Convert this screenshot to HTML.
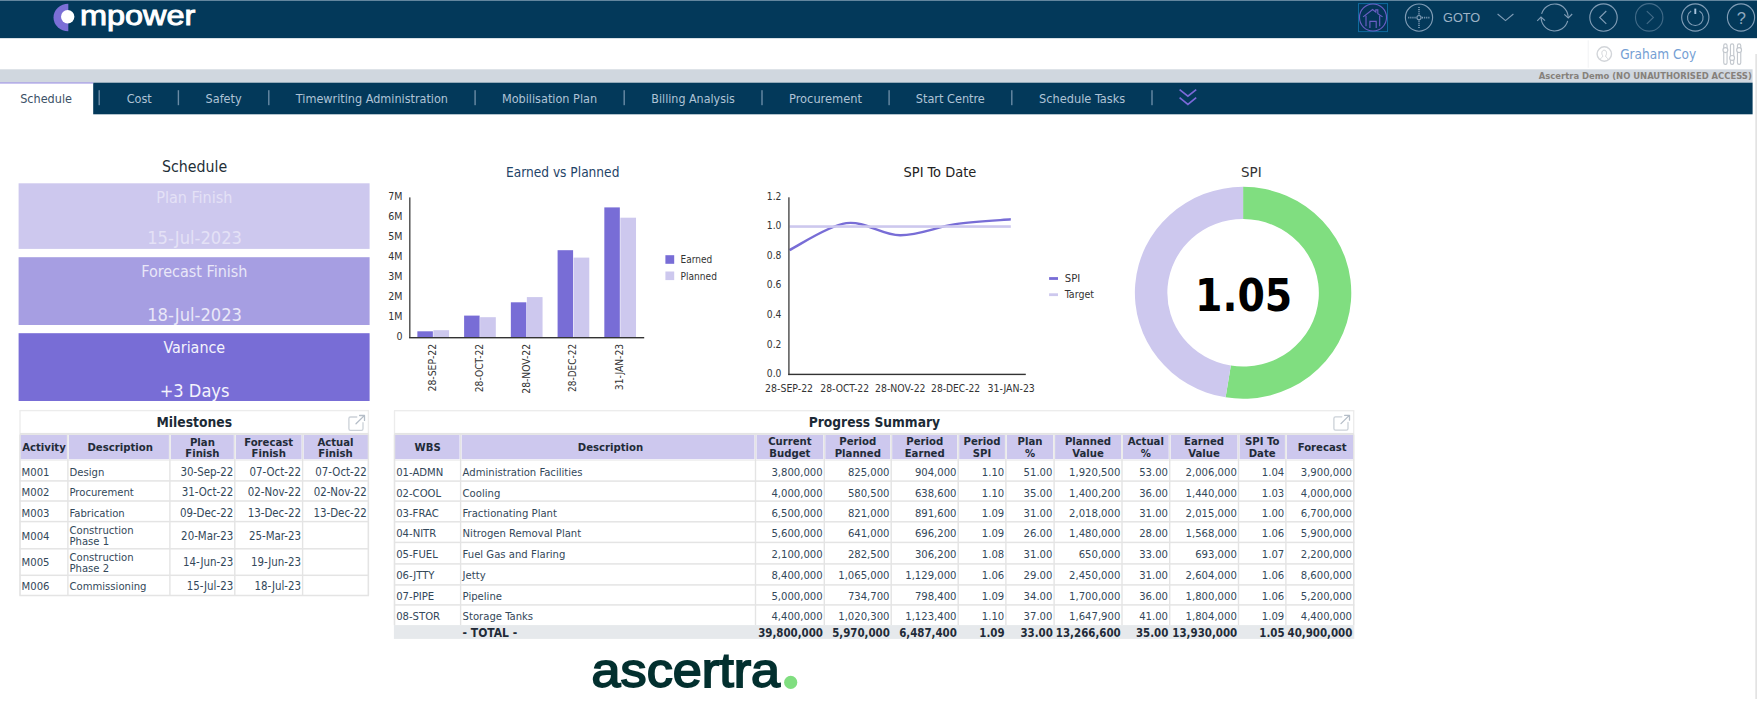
<!DOCTYPE html>
<html lang="en"><head><meta charset="utf-8"><title>mpower - Schedule</title>
<style>
html,body{margin:0;padding:0;background:#fff;}
body{width:1757px;height:701px;overflow:hidden;position:relative;font-family:"DejaVu Sans Condensed","Liberation Sans",sans-serif;font-size:11px;color:#33485a;}
.abs{position:absolute;}
#hdr{position:absolute;left:0;top:0;width:1757px;height:38px;}
#tabs{position:absolute;left:0;top:82.7px;width:1752.6px;height:30.8px;}
#tabs .tab{position:absolute;top:0.8px;width:200px;text-align:center;height:30.8px;line-height:30.8px;font-size:12.3px;color:#b7c9da;white-space:nowrap;}
svg{position:absolute;left:0;top:0;overflow:visible;}
svg text{font-family:"DejaVu Sans Condensed","Liberation Sans",sans-serif;}
svg .lib{font-family:"Liberation Sans","DejaVu Sans",sans-serif;}
</style></head><body>

<svg id="bg" width="1757" height="701" viewBox="0 0 1757 701">
<rect x="0.00" y="0.00" width="1757.00" height="38.15" fill="#03395a"/>
<rect x="0.00" y="0.00" width="1757.00" height="1.00" fill="#63869e"/>
<rect x="0.00" y="69.30" width="1752.60" height="13.60" fill="#d0d7df"/>
<rect x="93.20" y="82.70" width="1659.40" height="31.60" fill="#03395a"/>
<rect x="0.00" y="82.30" width="93.20" height="1.30" fill="#a89fe6"/>
<rect x="98.50" y="90.20" width="1.40" height="15.00" fill="#6a8ba5"/>
<rect x="177.70" y="90.20" width="1.40" height="15.00" fill="#6a8ba5"/>
<rect x="268.10" y="90.20" width="1.40" height="15.00" fill="#6a8ba5"/>
<rect x="474.40" y="90.20" width="1.40" height="15.00" fill="#6a8ba5"/>
<rect x="623.50" y="90.20" width="1.40" height="15.00" fill="#6a8ba5"/>
<rect x="761.30" y="90.20" width="1.40" height="15.00" fill="#6a8ba5"/>
<rect x="888.40" y="90.20" width="1.40" height="15.00" fill="#6a8ba5"/>
<rect x="1011.10" y="90.20" width="1.40" height="15.00" fill="#6a8ba5"/>
<rect x="1151.30" y="90.20" width="1.40" height="15.00" fill="#6a8ba5"/>
<rect x="1755.30" y="54.00" width="1.70" height="645.00" fill="#e3e3e3"/>
<rect x="18.60" y="183.30" width="351.00" height="65.60" fill="#cdc8ee"/>
<rect x="18.60" y="257.20" width="351.00" height="67.80" fill="#a69ee2"/>
<rect x="18.60" y="333.20" width="351.00" height="67.80" fill="#786dd6"/>
</svg>
<header id="hdr"></header>
<nav id="tabs"></nav>
<svg id="gfx" width="1757" height="701" viewBox="0 0 1757 701">
<g id="tablabels">
<text x="46.1" y="102.7" font-size="12.3" fill="#3b5166" text-anchor="middle" textLength="51.8" lengthAdjust="spacingAndGlyphs">Schedule</text>
<text x="139.2" y="102.7" font-size="12.3" fill="#afc3d6" text-anchor="middle" textLength="25.1" lengthAdjust="spacingAndGlyphs">Cost</text>
<text x="223.6" y="102.7" font-size="12.3" fill="#afc3d6" text-anchor="middle" textLength="36.1" lengthAdjust="spacingAndGlyphs">Safety</text>
<text x="371.9" y="102.7" font-size="12.3" fill="#afc3d6" text-anchor="middle" textLength="152.2" lengthAdjust="spacingAndGlyphs">Timewriting Administration</text>
<text x="549.5" y="102.7" font-size="12.3" fill="#afc3d6" text-anchor="middle" textLength="95.2" lengthAdjust="spacingAndGlyphs">Mobilisation Plan</text>
<text x="693.1" y="102.7" font-size="12.3" fill="#afc3d6" text-anchor="middle" textLength="83.6" lengthAdjust="spacingAndGlyphs">Billing Analysis</text>
<text x="825.5" y="102.7" font-size="12.3" fill="#afc3d6" text-anchor="middle" textLength="72.9" lengthAdjust="spacingAndGlyphs">Procurement</text>
<text x="950.3" y="102.7" font-size="12.3" fill="#afc3d6" text-anchor="middle" textLength="69.1" lengthAdjust="spacingAndGlyphs">Start Centre</text>
<text x="1082.1" y="102.7" font-size="12.3" fill="#afc3d6" text-anchor="middle" textLength="86.2" lengthAdjust="spacingAndGlyphs">Schedule Tasks</text>
</g>
<g id="cards">
<text x="194.6" y="171.7" font-size="15.7" fill="#1f2f38" text-anchor="middle" textLength="65.2" lengthAdjust="spacingAndGlyphs">Schedule</text>
<text x="194.3" y="203.0" font-size="16" fill="#e4e1f6" text-anchor="middle" textLength="76.2" lengthAdjust="spacingAndGlyphs">Plan Finish</text>
<text x="194.6" y="244.4" font-size="18" fill="#e4e1f6" text-anchor="middle" textLength="94.8" lengthAdjust="spacingAndGlyphs">15-Jul-2023</text>
<text x="194.3" y="277.2" font-size="16" fill="#e9e7f8" text-anchor="middle" textLength="106.2" lengthAdjust="spacingAndGlyphs">Forecast Finish</text>
<text x="194.6" y="320.6" font-size="18" fill="#e9e7f8" text-anchor="middle" textLength="94.8" lengthAdjust="spacingAndGlyphs">18-Jul-2023</text>
<text x="194.3" y="353.2" font-size="16" fill="#f4f3fc" text-anchor="middle" textLength="61.8" lengthAdjust="spacingAndGlyphs">Variance</text>
<text x="194.6" y="396.6" font-size="18" fill="#f4f3fc" text-anchor="middle" textLength="69.8" lengthAdjust="spacingAndGlyphs">+3 Days</text>
</g>
<g id="logo">
<path d="M68.3 3.8 A14.8 13.7 0 0 0 68.3 31.2 Z" fill="#7b6fd6"/>
<circle cx="67.7" cy="16.8" r="6.7" fill="#fff"/>
<text class="lib" x="79.9" y="25.2" font-size="27" fill="#fff" stroke="#fff" stroke-width="0.9" textLength="115.4" lengthAdjust="spacingAndGlyphs">mpower</text>
</g>
<g id="hicons" fill="none" stroke="#809db6" stroke-width="1.15">
<rect x="1358.5" y="3.6" width="29" height="28" fill="#033558" stroke="#0e6a9d" stroke-width="1"/>
<g stroke="#6a5fc4" stroke-width="1.15"><circle cx="1373" cy="17.5" r="13.5"/>
<path d="M1363.1 16.9 L1372.6 9.6 L1375.8 12.1 V9.8 H1377.8 V13.6 L1382.6 16.9 M1366 15.8 V26.2 M1379.7 15.8 V26.2 M1369.9 28 V21.4 H1376.2 V28"/></g>
<circle cx="1419" cy="17.6" r="13.6"/><circle cx="1419" cy="17.6" r="2.1"/>
<path d="M1419 7 V14.6 M1419 20.6 V28.2 M1408.2 17.6 H1416 M1422 17.6 H1429.8" stroke-dasharray="1.1 1" stroke-width="1.6"/>
<path d="M1497.6 14 L1505.5 20.6 L1513.4 14"/>
<path d="M1541.61 13.97 A13.5 13.5 0 0 1 1568.14 17.93"/>
<path d="M1567.69 20.95 A13.5 13.5 0 0 1 1541.16 16.99"/>
<path d="M1564.3 14.3 L1568.3 18 L1572.2 14 M1537.2 20.8 L1541 17 L1545 20.6"/>
<circle cx="1603.5" cy="17.5" r="13.7"/><path d="M1606.3 11 L1599.7 17.5 L1606.3 23.9"/>
<g opacity="0.5"><circle cx="1649.2" cy="17.4" r="13.7"/><path d="M1646.8 11.2 L1653.4 17.4 L1646.8 23.8"/></g>
<circle cx="1695.3" cy="17.5" r="13.6"/>
<path d="M1699.43 11.09 A7.8 7.8 0 1 1 1691.17 11.09"/>
<path d="M1695.3 8.6 V14" stroke="#a9c5df" stroke-width="1.9"/>
<circle cx="1741" cy="17.5" r="13.6"/>
</g>
<text class="lib" x="1443" y="22" font-size="13.3" fill="#9db3c6" textLength="37.2" lengthAdjust="spacingAndGlyphs">GOTO</text>
<text class="lib" x="1741.3" y="23.9" font-size="16.5" fill="#8fa9bf" text-anchor="middle" textLength="9.19" lengthAdjust="spacingAndGlyphs">?</text>
<g id="user">
<rect x="1587.70" y="40.30" width="1.00" height="27.50" fill="#f1f2f4"/>
<g fill="none" stroke="#d2d5d9" stroke-width="1.4"><circle cx="1604.3" cy="54" r="7.2"/>
<path d="M1600.3 59.6 C1600.6 57.6 1602.6 57.4 1603 56 C1601.4 54.6 1601.2 50.2 1604.2 50.2 C1607.2 50.2 1607 54.6 1605.4 56 C1605.8 57.4 1607.8 57.6 1608.1 59.6" stroke-width="1"/></g>
<text x="1620.2" y="58.8" font-size="13.3" fill="#75a0d4" textLength="75.9" lengthAdjust="spacingAndGlyphs">Graham Coy</text>
<rect x="1723.75" y="43.9" width="3.3" height="20.5" rx="1.65" fill="#fff" stroke="#c3c8ce" stroke-width="1.15"/>
<circle cx="1725.4" cy="50.1" r="2.45" fill="#fff" stroke="#c3c8ce" stroke-width="1.15"/>
<rect x="1730.45" y="43.9" width="3.3" height="20.5" rx="1.65" fill="#fff" stroke="#c3c8ce" stroke-width="1.15"/>
<circle cx="1732.1" cy="57.9" r="2.45" fill="#fff" stroke="#c3c8ce" stroke-width="1.15"/>
<rect x="1737.45" y="43.9" width="3.3" height="20.5" rx="1.65" fill="#fff" stroke="#c3c8ce" stroke-width="1.15"/>
<circle cx="1739.1" cy="50.1" r="2.45" fill="#fff" stroke="#c3c8ce" stroke-width="1.15"/>
<text x="1751.8" y="78.9" font-size="9.3" fill="#86817b" text-anchor="end" font-weight="bold" textLength="213.0" lengthAdjust="spacingAndGlyphs">Ascertra Demo (NO UNAUTHORISED ACCESS)</text>
</g>
<path d="M1179.6 89.6 L1187.9 96.2 L1196.2 89.6 M1179.6 97.6 L1187.9 104.3 L1196.2 97.6" fill="none" stroke="#7c69d9" stroke-width="1.7"/>
<g id="barchart">
<text x="562.7" y="176.7" font-size="13.6" fill="#1f4468" text-anchor="middle" textLength="113.4" lengthAdjust="spacingAndGlyphs">Earned vs Planned</text>
<rect x="417.37" y="331.30" width="15.50" height="6.00" fill="#786dd6"/>
<rect x="433.37" y="330.20" width="15.70" height="7.10" fill="#cdc8ee"/>
<rect x="464.11" y="315.60" width="15.50" height="21.70" fill="#786dd6"/>
<rect x="480.11" y="317.20" width="15.70" height="20.10" fill="#cdc8ee"/>
<rect x="510.85" y="302.30" width="15.50" height="35.00" fill="#786dd6"/>
<rect x="526.85" y="297.10" width="15.70" height="40.20" fill="#cdc8ee"/>
<rect x="557.59" y="250.20" width="15.50" height="87.10" fill="#786dd6"/>
<rect x="573.59" y="257.60" width="15.70" height="79.70" fill="#cdc8ee"/>
<rect x="604.33" y="207.40" width="15.50" height="129.90" fill="#786dd6"/>
<rect x="620.33" y="217.70" width="15.70" height="119.60" fill="#cdc8ee"/>
<rect x="409.10" y="197.40" width="1.40" height="140.60" fill="#4a4a4a"/>
<rect x="409.10" y="337.00" width="235.10" height="1.40" fill="#333"/>
<text x="402.5" y="340.1" font-size="10.5" fill="#333" text-anchor="end" textLength="6.02" lengthAdjust="spacingAndGlyphs">0</text>
<text x="402.5" y="320.1" font-size="10.5" fill="#333" text-anchor="end" textLength="14.17" lengthAdjust="spacingAndGlyphs">1M</text>
<text x="402.5" y="300.1" font-size="10.5" fill="#333" text-anchor="end" textLength="14.17" lengthAdjust="spacingAndGlyphs">2M</text>
<text x="402.5" y="280.1" font-size="10.5" fill="#333" text-anchor="end" textLength="14.17" lengthAdjust="spacingAndGlyphs">3M</text>
<text x="402.5" y="260.1" font-size="10.5" fill="#333" text-anchor="end" textLength="14.17" lengthAdjust="spacingAndGlyphs">4M</text>
<text x="402.5" y="240.1" font-size="10.5" fill="#333" text-anchor="end" textLength="14.17" lengthAdjust="spacingAndGlyphs">5M</text>
<text x="402.5" y="220.1" font-size="10.5" fill="#333" text-anchor="end" textLength="14.17" lengthAdjust="spacingAndGlyphs">6M</text>
<text x="402.5" y="200.1" font-size="10.5" fill="#333" text-anchor="end" textLength="14.17" lengthAdjust="spacingAndGlyphs">7M</text>
<text transform="translate(432.3 343.9) rotate(-90)" x="0" y="3.8" font-size="10.2" text-anchor="end" fill="#333" textLength="47.6" lengthAdjust="spacingAndGlyphs">28-SEP-22</text>
<text transform="translate(479.0 343.9) rotate(-90)" x="0" y="3.8" font-size="10.2" text-anchor="end" fill="#333" textLength="48.3" lengthAdjust="spacingAndGlyphs">28-OCT-22</text>
<text transform="translate(525.8 343.9) rotate(-90)" x="0" y="3.8" font-size="10.2" text-anchor="end" fill="#333" textLength="49.8" lengthAdjust="spacingAndGlyphs">28-NOV-22</text>
<text transform="translate(572.5 343.9) rotate(-90)" x="0" y="3.8" font-size="10.2" text-anchor="end" fill="#333" textLength="48.0" lengthAdjust="spacingAndGlyphs">28-DEC-22</text>
<text transform="translate(619.2 343.9) rotate(-90)" x="0" y="3.8" font-size="10.2" text-anchor="end" fill="#333" textLength="46.3" lengthAdjust="spacingAndGlyphs">31-JAN-23</text>
<rect x="665.40" y="255.20" width="8.80" height="8.60" fill="#786dd6"/>
<rect x="665.40" y="271.50" width="8.80" height="8.60" fill="#cdc8ee"/>
<text x="680.6" y="262.8" font-size="10" fill="#333" textLength="31.6" lengthAdjust="spacingAndGlyphs">Earned</text>
<text x="680.6" y="279.5" font-size="10" fill="#333" textLength="36.3" lengthAdjust="spacingAndGlyphs">Planned</text>
</g>
<g id="linechart">
<text x="939.9" y="176.7" font-size="14" fill="#222" text-anchor="middle" textLength="72.7" lengthAdjust="spacingAndGlyphs">SPI To Date</text>
<path d="M789.50 250.06 C798.97 245.57 827.87 225.61 846.30 223.15 C864.73 220.69 881.90 235.10 900.10 235.27 C918.30 235.45 937.05 226.85 955.50 224.18 C973.95 221.52 1001.58 220.12 1010.80 219.31" fill="none" stroke="#786dd6" stroke-width="2.4"/>
<rect x="789.50" y="225.25" width="221.30" height="2.60" fill="#cdc8ee"/>
<rect x="788.20" y="197.30" width="1.40" height="177.80" fill="#4a4a4a"/>
<rect x="788.20" y="373.70" width="237.60" height="1.40" fill="#333"/>
<text x="781.4" y="377.1" font-size="10.2" fill="#333" text-anchor="end" textLength="14.58" lengthAdjust="spacingAndGlyphs">0.0</text>
<text x="781.4" y="347.5" font-size="10.2" fill="#333" text-anchor="end" textLength="14.58" lengthAdjust="spacingAndGlyphs">0.2</text>
<text x="781.4" y="318.0" font-size="10.2" fill="#333" text-anchor="end" textLength="14.58" lengthAdjust="spacingAndGlyphs">0.4</text>
<text x="781.4" y="288.4" font-size="10.2" fill="#333" text-anchor="end" textLength="14.58" lengthAdjust="spacingAndGlyphs">0.6</text>
<text x="781.4" y="258.8" font-size="10.2" fill="#333" text-anchor="end" textLength="14.58" lengthAdjust="spacingAndGlyphs">0.8</text>
<text x="781.4" y="229.2" font-size="10.2" fill="#333" text-anchor="end" textLength="14.58" lengthAdjust="spacingAndGlyphs">1.0</text>
<text x="781.4" y="199.7" font-size="10.2" fill="#333" text-anchor="end" textLength="14.58" lengthAdjust="spacingAndGlyphs">1.2</text>
<text x="789.1" y="391.5" font-size="10.2" fill="#333" text-anchor="middle" textLength="48.0" lengthAdjust="spacingAndGlyphs">28-SEP-22</text>
<text x="844.7" y="391.5" font-size="10.2" fill="#333" text-anchor="middle" textLength="48.7" lengthAdjust="spacingAndGlyphs">28-OCT-22</text>
<text x="900.3" y="391.5" font-size="10.2" fill="#333" text-anchor="middle" textLength="50.5" lengthAdjust="spacingAndGlyphs">28-NOV-22</text>
<text x="955.6" y="391.5" font-size="10.2" fill="#333" text-anchor="middle" textLength="49.0" lengthAdjust="spacingAndGlyphs">28-DEC-22</text>
<text x="1011.2" y="391.5" font-size="10.2" fill="#333" text-anchor="middle" textLength="47.3" lengthAdjust="spacingAndGlyphs">31-JAN-23</text>
<rect x="1049.10" y="277.10" width="8.90" height="2.80" fill="#786dd6"/>
<rect x="1049.10" y="293.30" width="8.90" height="2.80" fill="#cdc8ee"/>
<text x="1064.8" y="281.7" font-size="10" fill="#333" textLength="15.5" lengthAdjust="spacingAndGlyphs">SPI</text>
<text x="1064.8" y="297.8" font-size="10" fill="#333" textLength="29.2" lengthAdjust="spacingAndGlyphs">Target</text>
</g>
<g id="donut">
<text x="1251.4" y="176.7" font-size="14" fill="#333" text-anchor="middle" textLength="20.6" lengthAdjust="spacingAndGlyphs">SPI</text>
<path d="M1243.10 186.85 A108.20 105.95 0 1 1 1225.61 397.36 L1230.86 365.58 A75.75 73.75 0 1 0 1243.10 219.05 Z" fill="#80de80"/>
<path d="M1225.61 397.36 A108.20 105.95 0 0 1 1243.10 186.85 L1243.10 219.05 A75.75 73.75 0 0 0 1230.86 365.58 Z" fill="#cdc8ee"/>
<text x="1243.6" y="311.2" font-size="44.5" fill="#000" text-anchor="middle" font-weight="bold" textLength="97.2" lengthAdjust="spacingAndGlyphs">1.05</text>
</g>
<g id="milestones">
<rect x="19.40" y="409.95" width="349.60" height="1.30" fill="#ececec"/>
<rect x="19.35" y="410.60" width="1.30" height="184.90" fill="#ececec"/>
<rect x="367.75" y="410.60" width="1.30" height="184.90" fill="#ececec"/>
<rect x="20.00" y="432.90" width="348.40" height="2.00" fill="#e4e4e4"/>
<rect x="20.30" y="435.00" width="46.60" height="24.40" fill="#cdc8ee"/>
<rect x="68.90" y="435.00" width="100.00" height="24.40" fill="#cdc8ee"/>
<rect x="170.90" y="435.00" width="62.90" height="24.40" fill="#cdc8ee"/>
<rect x="235.80" y="435.00" width="65.80" height="24.40" fill="#cdc8ee"/>
<rect x="303.60" y="435.00" width="64.50" height="24.40" fill="#cdc8ee"/>
<rect x="19.40" y="459.45" width="349.60" height="1.50" fill="#f1f1f1"/>
<rect x="19.40" y="480.15" width="349.60" height="1.50" fill="#e4e4e4"/>
<rect x="19.40" y="500.25" width="349.60" height="1.50" fill="#e4e4e4"/>
<rect x="19.40" y="520.85" width="349.60" height="1.50" fill="#e4e4e4"/>
<rect x="19.40" y="548.05" width="349.60" height="1.50" fill="#e4e4e4"/>
<rect x="19.40" y="574.55" width="349.60" height="1.50" fill="#e4e4e4"/>
<rect x="19.40" y="594.75" width="349.60" height="1.50" fill="#e4e4e4"/>
<rect x="67.20" y="434.60" width="1.40" height="160.90" fill="#e4e4e4"/>
<rect x="169.20" y="434.60" width="1.40" height="160.90" fill="#e4e4e4"/>
<rect x="234.10" y="434.60" width="1.40" height="160.90" fill="#e4e4e4"/>
<rect x="301.90" y="434.60" width="1.40" height="160.90" fill="#e4e4e4"/>
<rect x="19.30" y="434.60" width="1.40" height="160.90" fill="#e4e4e4"/>
<rect x="367.70" y="434.60" width="1.40" height="160.90" fill="#e4e4e4"/>
<text x="194.3" y="427.3" font-size="13.6" fill="#1c2a36" text-anchor="middle" font-weight="bold" textLength="75.6" lengthAdjust="spacingAndGlyphs">Milestones</text>
<g fill="none" stroke="#cbd1d8" stroke-width="1.3" stroke-linecap="round" stroke-linejoin="round"><path d="M356.8 417.0 H350.5 Q348.9 417.0 348.9 418.6 V428.8 Q348.9 430.4 350.5 430.4 H361.4 Q363.0 430.4 363.0 428.8 V422.7"/><path d="M356.0 423.8 L364.3 415.6 M359.6 415.5 H364.5 V420.4" stroke="#b4bdc7"/></g>
<text x="44.0" y="451.4" font-size="11.25" fill="#222b38" text-anchor="middle" font-weight="bold" textLength="43.64" lengthAdjust="spacingAndGlyphs">Activity</text>
<text x="120.2" y="451.4" font-size="11.25" fill="#222b38" text-anchor="middle" font-weight="bold" textLength="65.47" lengthAdjust="spacingAndGlyphs">Description</text>
<text x="202.4" y="445.5" font-size="11.25" fill="#222b38" text-anchor="middle" font-weight="bold" textLength="24.92" lengthAdjust="spacingAndGlyphs">Plan</text>
<text x="202.4" y="456.6" font-size="11.25" fill="#222b38" text-anchor="middle" font-weight="bold" textLength="34.30" lengthAdjust="spacingAndGlyphs">Finish</text>
<text x="268.7" y="445.5" font-size="11.25" fill="#222b38" text-anchor="middle" font-weight="bold" textLength="48.97" lengthAdjust="spacingAndGlyphs">Forecast</text>
<text x="268.7" y="456.6" font-size="11.25" fill="#222b38" text-anchor="middle" font-weight="bold" textLength="34.30" lengthAdjust="spacingAndGlyphs">Finish</text>
<text x="335.5" y="445.5" font-size="11.25" fill="#222b38" text-anchor="middle" font-weight="bold" textLength="36.19" lengthAdjust="spacingAndGlyphs">Actual</text>
<text x="335.5" y="456.6" font-size="11.25" fill="#222b38" text-anchor="middle" font-weight="bold" textLength="34.30" lengthAdjust="spacingAndGlyphs">Finish</text>
<text x="21.6" y="475.7" font-size="11.2" fill="#33485a" textLength="27.91" lengthAdjust="spacingAndGlyphs">M001</text>
<text x="69.5" y="475.7" font-size="11.2" fill="#33485a" textLength="34.77" lengthAdjust="spacingAndGlyphs">Design</text>
<text x="233.2" y="475.7" font-size="11.4" fill="#33485a" text-anchor="end" textLength="52.80" lengthAdjust="spacingAndGlyphs">30-Sep-22</text>
<text x="301.0" y="475.7" font-size="11.4" fill="#33485a" text-anchor="end" textLength="51.52" lengthAdjust="spacingAndGlyphs">07-Oct-22</text>
<text x="366.8" y="475.7" font-size="11.4" fill="#33485a" text-anchor="end" textLength="51.52" lengthAdjust="spacingAndGlyphs">07-Oct-22</text>
<text x="21.6" y="496.2" font-size="11.2" fill="#33485a" textLength="27.91" lengthAdjust="spacingAndGlyphs">M002</text>
<text x="69.5" y="496.2" font-size="11.2" fill="#33485a" textLength="64.25" lengthAdjust="spacingAndGlyphs">Procurement</text>
<text x="233.2" y="496.2" font-size="11.4" fill="#33485a" text-anchor="end" textLength="51.52" lengthAdjust="spacingAndGlyphs">31-Oct-22</text>
<text x="301.0" y="496.2" font-size="11.4" fill="#33485a" text-anchor="end" textLength="53.17" lengthAdjust="spacingAndGlyphs">02-Nov-22</text>
<text x="366.8" y="496.2" font-size="11.4" fill="#33485a" text-anchor="end" textLength="53.17" lengthAdjust="spacingAndGlyphs">02-Nov-22</text>
<text x="21.6" y="516.6" font-size="11.2" fill="#33485a" textLength="27.91" lengthAdjust="spacingAndGlyphs">M003</text>
<text x="69.5" y="516.6" font-size="11.2" fill="#33485a" textLength="55.23" lengthAdjust="spacingAndGlyphs">Fabrication</text>
<text x="233.2" y="516.6" font-size="11.4" fill="#33485a" text-anchor="end" textLength="53.31" lengthAdjust="spacingAndGlyphs">09-Dec-22</text>
<text x="301.0" y="516.6" font-size="11.4" fill="#33485a" text-anchor="end" textLength="53.31" lengthAdjust="spacingAndGlyphs">13-Dec-22</text>
<text x="366.8" y="516.6" font-size="11.4" fill="#33485a" text-anchor="end" textLength="53.31" lengthAdjust="spacingAndGlyphs">13-Dec-22</text>
<text x="21.6" y="539.9" font-size="11.2" fill="#33485a" textLength="27.91" lengthAdjust="spacingAndGlyphs">M004</text>
<text x="69.5" y="534.3" font-size="11.2" fill="#33485a" textLength="64.09" lengthAdjust="spacingAndGlyphs">Construction</text>
<text x="69.5" y="545.4" font-size="11.2" fill="#33485a" textLength="39.66" lengthAdjust="spacingAndGlyphs">Phase 1</text>
<text x="233.2" y="539.9" font-size="11.4" fill="#33485a" text-anchor="end" textLength="52.08" lengthAdjust="spacingAndGlyphs">20-Mar-23</text>
<text x="301.0" y="539.9" font-size="11.4" fill="#33485a" text-anchor="end" textLength="52.08" lengthAdjust="spacingAndGlyphs">25-Mar-23</text>
<text x="21.6" y="566.4" font-size="11.2" fill="#33485a" textLength="27.91" lengthAdjust="spacingAndGlyphs">M005</text>
<text x="69.5" y="560.8" font-size="11.2" fill="#33485a" textLength="64.09" lengthAdjust="spacingAndGlyphs">Construction</text>
<text x="69.5" y="571.9" font-size="11.2" fill="#33485a" textLength="39.66" lengthAdjust="spacingAndGlyphs">Phase 2</text>
<text x="233.2" y="566.4" font-size="11.4" fill="#33485a" text-anchor="end" textLength="50.12" lengthAdjust="spacingAndGlyphs">14-Jun-23</text>
<text x="301.0" y="566.4" font-size="11.4" fill="#33485a" text-anchor="end" textLength="50.12" lengthAdjust="spacingAndGlyphs">19-Jun-23</text>
<text x="21.6" y="589.9" font-size="11.2" fill="#33485a" textLength="27.91" lengthAdjust="spacingAndGlyphs">M006</text>
<text x="69.5" y="589.9" font-size="11.2" fill="#33485a" textLength="77.00" lengthAdjust="spacingAndGlyphs">Commissioning</text>
<text x="233.2" y="589.9" font-size="11.4" fill="#33485a" text-anchor="end" textLength="46.48" lengthAdjust="spacingAndGlyphs">15-Jul-23</text>
<text x="301.0" y="589.9" font-size="11.4" fill="#33485a" text-anchor="end" textLength="46.48" lengthAdjust="spacingAndGlyphs">18-Jul-23</text>
</g>
<g id="progress">
<rect x="393.90" y="410.05" width="960.40" height="1.30" fill="#ececec"/>
<rect x="393.85" y="410.70" width="1.30" height="214.50" fill="#ececec"/>
<rect x="1353.05" y="410.70" width="1.30" height="214.50" fill="#ececec"/>
<rect x="394.50" y="432.90" width="959.20" height="2.00" fill="#e4e4e4"/>
<rect x="394.50" y="435.00" width="65.10" height="24.30" fill="#cdc8ee"/>
<rect x="461.60" y="435.00" width="292.90" height="24.30" fill="#cdc8ee"/>
<rect x="756.50" y="435.00" width="66.80" height="24.30" fill="#cdc8ee"/>
<rect x="825.30" y="435.00" width="64.90" height="24.30" fill="#cdc8ee"/>
<rect x="892.20" y="435.00" width="65.00" height="24.30" fill="#cdc8ee"/>
<rect x="959.20" y="435.00" width="45.70" height="24.30" fill="#cdc8ee"/>
<rect x="1006.90" y="435.00" width="46.20" height="24.30" fill="#cdc8ee"/>
<rect x="1055.10" y="435.00" width="65.90" height="24.30" fill="#cdc8ee"/>
<rect x="1123.00" y="435.00" width="45.70" height="24.30" fill="#cdc8ee"/>
<rect x="1170.70" y="435.00" width="66.80" height="24.30" fill="#cdc8ee"/>
<rect x="1239.50" y="435.00" width="45.40" height="24.30" fill="#cdc8ee"/>
<rect x="1286.90" y="435.00" width="66.50" height="24.30" fill="#cdc8ee"/>
<rect x="393.90" y="459.55" width="960.40" height="1.50" fill="#f1f1f1"/>
<rect x="393.90" y="480.35" width="960.40" height="1.50" fill="#e4e4e4"/>
<rect x="393.90" y="500.35" width="960.40" height="1.50" fill="#e4e4e4"/>
<rect x="393.90" y="521.05" width="960.40" height="1.50" fill="#e4e4e4"/>
<rect x="393.90" y="541.65" width="960.40" height="1.50" fill="#e4e4e4"/>
<rect x="393.90" y="563.15" width="960.40" height="1.50" fill="#e4e4e4"/>
<rect x="393.90" y="584.15" width="960.40" height="1.50" fill="#e4e4e4"/>
<rect x="393.90" y="604.15" width="960.40" height="1.50" fill="#e4e4e4"/>
<rect x="459.90" y="434.60" width="1.40" height="190.60" fill="#e4e4e4"/>
<rect x="754.80" y="434.60" width="1.40" height="190.60" fill="#e4e4e4"/>
<rect x="823.60" y="434.60" width="1.40" height="190.60" fill="#e4e4e4"/>
<rect x="890.50" y="434.60" width="1.40" height="190.60" fill="#e4e4e4"/>
<rect x="957.50" y="434.60" width="1.40" height="190.60" fill="#e4e4e4"/>
<rect x="1005.20" y="434.60" width="1.40" height="190.60" fill="#e4e4e4"/>
<rect x="1053.40" y="434.60" width="1.40" height="190.60" fill="#e4e4e4"/>
<rect x="1121.30" y="434.60" width="1.40" height="190.60" fill="#e4e4e4"/>
<rect x="1169.00" y="434.60" width="1.40" height="190.60" fill="#e4e4e4"/>
<rect x="1237.80" y="434.60" width="1.40" height="190.60" fill="#e4e4e4"/>
<rect x="1285.20" y="434.60" width="1.40" height="190.60" fill="#e4e4e4"/>
<rect x="393.80" y="434.60" width="1.40" height="190.60" fill="#e4e4e4"/>
<rect x="1353.00" y="434.60" width="1.40" height="190.60" fill="#e4e4e4"/>
<rect x="393.90" y="625.10" width="960.40" height="13.80" fill="#e6e9ec"/>
<text x="874.4" y="426.9" font-size="13.6" fill="#1c2a36" text-anchor="middle" font-weight="bold" textLength="131.2" lengthAdjust="spacingAndGlyphs">Progress Summary</text>
<g fill="none" stroke="#cbd1d8" stroke-width="1.3" stroke-linecap="round" stroke-linejoin="round"><path d="M1341.8 416.8 H1335.5 Q1333.9 416.8 1333.9 418.4 V428.6 Q1333.9 430.2 1335.5 430.2 H1346.4 Q1348.0 430.2 1348.0 428.6 V422.5"/><path d="M1341.0 423.6 L1349.3 415.4 M1344.6 415.3 H1349.5 V420.2" stroke="#b4bdc7"/></g>
<text x="427.6" y="451.4" font-size="11.25" fill="#222b38" text-anchor="middle" font-weight="bold" textLength="26.17" lengthAdjust="spacingAndGlyphs">WBS</text>
<text x="610.5" y="451.4" font-size="11.25" fill="#222b38" text-anchor="middle" font-weight="bold" textLength="65.47" lengthAdjust="spacingAndGlyphs">Description</text>
<text x="789.9" y="445.4" font-size="11.25" fill="#222b38" text-anchor="middle" font-weight="bold" textLength="43.55" lengthAdjust="spacingAndGlyphs">Current</text>
<text x="789.9" y="456.8" font-size="11.25" fill="#222b38" text-anchor="middle" font-weight="bold" textLength="41.12" lengthAdjust="spacingAndGlyphs">Budget</text>
<text x="857.8" y="445.4" font-size="11.25" fill="#222b38" text-anchor="middle" font-weight="bold" textLength="36.95" lengthAdjust="spacingAndGlyphs">Period</text>
<text x="857.8" y="456.8" font-size="11.25" fill="#222b38" text-anchor="middle" font-weight="bold" textLength="46.25" lengthAdjust="spacingAndGlyphs">Planned</text>
<text x="924.7" y="445.4" font-size="11.25" fill="#222b38" text-anchor="middle" font-weight="bold" textLength="36.95" lengthAdjust="spacingAndGlyphs">Period</text>
<text x="924.7" y="456.8" font-size="11.25" fill="#222b38" text-anchor="middle" font-weight="bold" textLength="40.06" lengthAdjust="spacingAndGlyphs">Earned</text>
<text x="982.0" y="445.4" font-size="11.25" fill="#222b38" text-anchor="middle" font-weight="bold" textLength="36.95" lengthAdjust="spacingAndGlyphs">Period</text>
<text x="982.0" y="456.8" font-size="11.25" fill="#222b38" text-anchor="middle" font-weight="bold" textLength="18.47" lengthAdjust="spacingAndGlyphs">SPI</text>
<text x="1030.0" y="445.4" font-size="11.25" fill="#222b38" text-anchor="middle" font-weight="bold" textLength="24.92" lengthAdjust="spacingAndGlyphs">Plan</text>
<text x="1030.0" y="456.8" font-size="11.25" fill="#222b38" text-anchor="middle" font-weight="bold" textLength="10.14" lengthAdjust="spacingAndGlyphs">%</text>
<text x="1088.0" y="445.4" font-size="11.25" fill="#222b38" text-anchor="middle" font-weight="bold" textLength="46.25" lengthAdjust="spacingAndGlyphs">Planned</text>
<text x="1088.0" y="456.8" font-size="11.25" fill="#222b38" text-anchor="middle" font-weight="bold" textLength="31.59" lengthAdjust="spacingAndGlyphs">Value</text>
<text x="1145.8" y="445.4" font-size="11.25" fill="#222b38" text-anchor="middle" font-weight="bold" textLength="36.19" lengthAdjust="spacingAndGlyphs">Actual</text>
<text x="1145.8" y="456.8" font-size="11.25" fill="#222b38" text-anchor="middle" font-weight="bold" textLength="10.14" lengthAdjust="spacingAndGlyphs">%</text>
<text x="1204.1" y="445.4" font-size="11.25" fill="#222b38" text-anchor="middle" font-weight="bold" textLength="40.06" lengthAdjust="spacingAndGlyphs">Earned</text>
<text x="1204.1" y="456.8" font-size="11.25" fill="#222b38" text-anchor="middle" font-weight="bold" textLength="31.59" lengthAdjust="spacingAndGlyphs">Value</text>
<text x="1262.2" y="445.4" font-size="11.25" fill="#222b38" text-anchor="middle" font-weight="bold" textLength="34.36" lengthAdjust="spacingAndGlyphs">SPI To</text>
<text x="1262.2" y="456.8" font-size="11.25" fill="#222b38" text-anchor="middle" font-weight="bold" textLength="26.95" lengthAdjust="spacingAndGlyphs">Date</text>
<text x="1322.2" y="451.4" font-size="11.25" fill="#222b38" text-anchor="middle" font-weight="bold" textLength="48.97" lengthAdjust="spacingAndGlyphs">Forecast</text>
<text x="396.2" y="475.8" font-size="11.2" fill="#33485a" textLength="47.05" lengthAdjust="spacingAndGlyphs">01-ADMN</text>
<text x="462.6" y="475.8" font-size="11.2" fill="#33485a" textLength="119.86" lengthAdjust="spacingAndGlyphs">Administration Facilities</text>
<text x="822.6" y="475.8" font-size="11.2" fill="#33485a" text-anchor="end" textLength="51.22" lengthAdjust="spacingAndGlyphs">3,800,000</text>
<text x="889.5" y="475.8" font-size="11.2" fill="#33485a" text-anchor="end" textLength="41.61" lengthAdjust="spacingAndGlyphs">825,000</text>
<text x="956.5" y="475.8" font-size="11.2" fill="#33485a" text-anchor="end" textLength="41.61" lengthAdjust="spacingAndGlyphs">904,000</text>
<text x="1004.2" y="475.8" font-size="11.2" fill="#33485a" text-anchor="end" textLength="22.41" lengthAdjust="spacingAndGlyphs">1.10</text>
<text x="1052.4" y="475.8" font-size="11.2" fill="#33485a" text-anchor="end" textLength="28.81" lengthAdjust="spacingAndGlyphs">51.00</text>
<text x="1120.3" y="475.8" font-size="11.2" fill="#33485a" text-anchor="end" textLength="51.22" lengthAdjust="spacingAndGlyphs">1,920,500</text>
<text x="1168.0" y="475.8" font-size="11.2" fill="#33485a" text-anchor="end" textLength="28.81" lengthAdjust="spacingAndGlyphs">53.00</text>
<text x="1236.8" y="475.8" font-size="11.2" fill="#33485a" text-anchor="end" textLength="51.22" lengthAdjust="spacingAndGlyphs">2,006,000</text>
<text x="1284.2" y="475.8" font-size="11.2" fill="#33485a" text-anchor="end" textLength="22.41" lengthAdjust="spacingAndGlyphs">1.04</text>
<text x="1352.0" y="475.8" font-size="11.2" fill="#33485a" text-anchor="end" textLength="51.22" lengthAdjust="spacingAndGlyphs">3,900,000</text>
<text x="396.2" y="496.6" font-size="11.2" fill="#33485a" textLength="44.92" lengthAdjust="spacingAndGlyphs">02-COOL</text>
<text x="462.6" y="496.6" font-size="11.2" fill="#33485a" textLength="37.72" lengthAdjust="spacingAndGlyphs">Cooling</text>
<text x="822.6" y="496.6" font-size="11.2" fill="#33485a" text-anchor="end" textLength="51.22" lengthAdjust="spacingAndGlyphs">4,000,000</text>
<text x="889.5" y="496.6" font-size="11.2" fill="#33485a" text-anchor="end" textLength="41.61" lengthAdjust="spacingAndGlyphs">580,500</text>
<text x="956.5" y="496.6" font-size="11.2" fill="#33485a" text-anchor="end" textLength="41.61" lengthAdjust="spacingAndGlyphs">638,600</text>
<text x="1004.2" y="496.6" font-size="11.2" fill="#33485a" text-anchor="end" textLength="22.41" lengthAdjust="spacingAndGlyphs">1.10</text>
<text x="1052.4" y="496.6" font-size="11.2" fill="#33485a" text-anchor="end" textLength="28.81" lengthAdjust="spacingAndGlyphs">35.00</text>
<text x="1120.3" y="496.6" font-size="11.2" fill="#33485a" text-anchor="end" textLength="51.22" lengthAdjust="spacingAndGlyphs">1,400,200</text>
<text x="1168.0" y="496.6" font-size="11.2" fill="#33485a" text-anchor="end" textLength="28.81" lengthAdjust="spacingAndGlyphs">36.00</text>
<text x="1236.8" y="496.6" font-size="11.2" fill="#33485a" text-anchor="end" textLength="51.22" lengthAdjust="spacingAndGlyphs">1,440,000</text>
<text x="1284.2" y="496.6" font-size="11.2" fill="#33485a" text-anchor="end" textLength="22.41" lengthAdjust="spacingAndGlyphs">1.03</text>
<text x="1352.0" y="496.6" font-size="11.2" fill="#33485a" text-anchor="end" textLength="51.22" lengthAdjust="spacingAndGlyphs">4,000,000</text>
<text x="396.2" y="516.6" font-size="11.2" fill="#33485a" textLength="42.48" lengthAdjust="spacingAndGlyphs">03-FRAC</text>
<text x="462.6" y="516.6" font-size="11.2" fill="#33485a" textLength="94.33" lengthAdjust="spacingAndGlyphs">Fractionating Plant</text>
<text x="822.6" y="516.6" font-size="11.2" fill="#33485a" text-anchor="end" textLength="51.22" lengthAdjust="spacingAndGlyphs">6,500,000</text>
<text x="889.5" y="516.6" font-size="11.2" fill="#33485a" text-anchor="end" textLength="41.61" lengthAdjust="spacingAndGlyphs">821,000</text>
<text x="956.5" y="516.6" font-size="11.2" fill="#33485a" text-anchor="end" textLength="41.61" lengthAdjust="spacingAndGlyphs">891,600</text>
<text x="1004.2" y="516.6" font-size="11.2" fill="#33485a" text-anchor="end" textLength="22.41" lengthAdjust="spacingAndGlyphs">1.09</text>
<text x="1052.4" y="516.6" font-size="11.2" fill="#33485a" text-anchor="end" textLength="28.81" lengthAdjust="spacingAndGlyphs">31.00</text>
<text x="1120.3" y="516.6" font-size="11.2" fill="#33485a" text-anchor="end" textLength="51.22" lengthAdjust="spacingAndGlyphs">2,018,000</text>
<text x="1168.0" y="516.6" font-size="11.2" fill="#33485a" text-anchor="end" textLength="28.81" lengthAdjust="spacingAndGlyphs">31.00</text>
<text x="1236.8" y="516.6" font-size="11.2" fill="#33485a" text-anchor="end" textLength="51.22" lengthAdjust="spacingAndGlyphs">2,015,000</text>
<text x="1284.2" y="516.6" font-size="11.2" fill="#33485a" text-anchor="end" textLength="22.41" lengthAdjust="spacingAndGlyphs">1.00</text>
<text x="1352.0" y="516.6" font-size="11.2" fill="#33485a" text-anchor="end" textLength="51.22" lengthAdjust="spacingAndGlyphs">6,700,000</text>
<text x="396.2" y="537.3" font-size="11.2" fill="#33485a" textLength="40.08" lengthAdjust="spacingAndGlyphs">04-NITR</text>
<text x="462.6" y="537.3" font-size="11.2" fill="#33485a" textLength="118.59" lengthAdjust="spacingAndGlyphs">Nitrogen Removal Plant</text>
<text x="822.6" y="537.3" font-size="11.2" fill="#33485a" text-anchor="end" textLength="51.22" lengthAdjust="spacingAndGlyphs">5,600,000</text>
<text x="889.5" y="537.3" font-size="11.2" fill="#33485a" text-anchor="end" textLength="41.61" lengthAdjust="spacingAndGlyphs">641,000</text>
<text x="956.5" y="537.3" font-size="11.2" fill="#33485a" text-anchor="end" textLength="41.61" lengthAdjust="spacingAndGlyphs">696,200</text>
<text x="1004.2" y="537.3" font-size="11.2" fill="#33485a" text-anchor="end" textLength="22.41" lengthAdjust="spacingAndGlyphs">1.09</text>
<text x="1052.4" y="537.3" font-size="11.2" fill="#33485a" text-anchor="end" textLength="28.81" lengthAdjust="spacingAndGlyphs">26.00</text>
<text x="1120.3" y="537.3" font-size="11.2" fill="#33485a" text-anchor="end" textLength="51.22" lengthAdjust="spacingAndGlyphs">1,480,000</text>
<text x="1168.0" y="537.3" font-size="11.2" fill="#33485a" text-anchor="end" textLength="28.81" lengthAdjust="spacingAndGlyphs">28.00</text>
<text x="1236.8" y="537.3" font-size="11.2" fill="#33485a" text-anchor="end" textLength="51.22" lengthAdjust="spacingAndGlyphs">1,568,000</text>
<text x="1284.2" y="537.3" font-size="11.2" fill="#33485a" text-anchor="end" textLength="22.41" lengthAdjust="spacingAndGlyphs">1.06</text>
<text x="1352.0" y="537.3" font-size="11.2" fill="#33485a" text-anchor="end" textLength="51.22" lengthAdjust="spacingAndGlyphs">5,900,000</text>
<text x="396.2" y="557.9" font-size="11.2" fill="#33485a" textLength="41.56" lengthAdjust="spacingAndGlyphs">05-FUEL</text>
<text x="462.6" y="557.9" font-size="11.2" fill="#33485a" textLength="102.75" lengthAdjust="spacingAndGlyphs">Fuel Gas and Flaring</text>
<text x="822.6" y="557.9" font-size="11.2" fill="#33485a" text-anchor="end" textLength="51.22" lengthAdjust="spacingAndGlyphs">2,100,000</text>
<text x="889.5" y="557.9" font-size="11.2" fill="#33485a" text-anchor="end" textLength="41.61" lengthAdjust="spacingAndGlyphs">282,500</text>
<text x="956.5" y="557.9" font-size="11.2" fill="#33485a" text-anchor="end" textLength="41.61" lengthAdjust="spacingAndGlyphs">306,200</text>
<text x="1004.2" y="557.9" font-size="11.2" fill="#33485a" text-anchor="end" textLength="22.41" lengthAdjust="spacingAndGlyphs">1.08</text>
<text x="1052.4" y="557.9" font-size="11.2" fill="#33485a" text-anchor="end" textLength="28.81" lengthAdjust="spacingAndGlyphs">31.00</text>
<text x="1120.3" y="557.9" font-size="11.2" fill="#33485a" text-anchor="end" textLength="41.61" lengthAdjust="spacingAndGlyphs">650,000</text>
<text x="1168.0" y="557.9" font-size="11.2" fill="#33485a" text-anchor="end" textLength="28.81" lengthAdjust="spacingAndGlyphs">33.00</text>
<text x="1236.8" y="557.9" font-size="11.2" fill="#33485a" text-anchor="end" textLength="41.61" lengthAdjust="spacingAndGlyphs">693,000</text>
<text x="1284.2" y="557.9" font-size="11.2" fill="#33485a" text-anchor="end" textLength="22.41" lengthAdjust="spacingAndGlyphs">1.07</text>
<text x="1352.0" y="557.9" font-size="11.2" fill="#33485a" text-anchor="end" textLength="51.22" lengthAdjust="spacingAndGlyphs">2,200,000</text>
<text x="396.2" y="579.4" font-size="11.2" fill="#33485a" textLength="38.28" lengthAdjust="spacingAndGlyphs">06-JTTY</text>
<text x="462.6" y="579.4" font-size="11.2" fill="#33485a" textLength="23.02" lengthAdjust="spacingAndGlyphs">Jetty</text>
<text x="822.6" y="579.4" font-size="11.2" fill="#33485a" text-anchor="end" textLength="51.22" lengthAdjust="spacingAndGlyphs">8,400,000</text>
<text x="889.5" y="579.4" font-size="11.2" fill="#33485a" text-anchor="end" textLength="51.22" lengthAdjust="spacingAndGlyphs">1,065,000</text>
<text x="956.5" y="579.4" font-size="11.2" fill="#33485a" text-anchor="end" textLength="51.22" lengthAdjust="spacingAndGlyphs">1,129,000</text>
<text x="1004.2" y="579.4" font-size="11.2" fill="#33485a" text-anchor="end" textLength="22.41" lengthAdjust="spacingAndGlyphs">1.06</text>
<text x="1052.4" y="579.4" font-size="11.2" fill="#33485a" text-anchor="end" textLength="28.81" lengthAdjust="spacingAndGlyphs">29.00</text>
<text x="1120.3" y="579.4" font-size="11.2" fill="#33485a" text-anchor="end" textLength="51.22" lengthAdjust="spacingAndGlyphs">2,450,000</text>
<text x="1168.0" y="579.4" font-size="11.2" fill="#33485a" text-anchor="end" textLength="28.81" lengthAdjust="spacingAndGlyphs">31.00</text>
<text x="1236.8" y="579.4" font-size="11.2" fill="#33485a" text-anchor="end" textLength="51.22" lengthAdjust="spacingAndGlyphs">2,604,000</text>
<text x="1284.2" y="579.4" font-size="11.2" fill="#33485a" text-anchor="end" textLength="22.41" lengthAdjust="spacingAndGlyphs">1.06</text>
<text x="1352.0" y="579.4" font-size="11.2" fill="#33485a" text-anchor="end" textLength="51.22" lengthAdjust="spacingAndGlyphs">8,600,000</text>
<text x="396.2" y="600.4" font-size="11.2" fill="#33485a" textLength="37.91" lengthAdjust="spacingAndGlyphs">07-PIPE</text>
<text x="462.6" y="600.4" font-size="11.2" fill="#33485a" textLength="39.38" lengthAdjust="spacingAndGlyphs">Pipeline</text>
<text x="822.6" y="600.4" font-size="11.2" fill="#33485a" text-anchor="end" textLength="51.22" lengthAdjust="spacingAndGlyphs">5,000,000</text>
<text x="889.5" y="600.4" font-size="11.2" fill="#33485a" text-anchor="end" textLength="41.61" lengthAdjust="spacingAndGlyphs">734,700</text>
<text x="956.5" y="600.4" font-size="11.2" fill="#33485a" text-anchor="end" textLength="41.61" lengthAdjust="spacingAndGlyphs">798,400</text>
<text x="1004.2" y="600.4" font-size="11.2" fill="#33485a" text-anchor="end" textLength="22.41" lengthAdjust="spacingAndGlyphs">1.09</text>
<text x="1052.4" y="600.4" font-size="11.2" fill="#33485a" text-anchor="end" textLength="28.81" lengthAdjust="spacingAndGlyphs">34.00</text>
<text x="1120.3" y="600.4" font-size="11.2" fill="#33485a" text-anchor="end" textLength="51.22" lengthAdjust="spacingAndGlyphs">1,700,000</text>
<text x="1168.0" y="600.4" font-size="11.2" fill="#33485a" text-anchor="end" textLength="28.81" lengthAdjust="spacingAndGlyphs">36.00</text>
<text x="1236.8" y="600.4" font-size="11.2" fill="#33485a" text-anchor="end" textLength="51.22" lengthAdjust="spacingAndGlyphs">1,800,000</text>
<text x="1284.2" y="600.4" font-size="11.2" fill="#33485a" text-anchor="end" textLength="22.41" lengthAdjust="spacingAndGlyphs">1.06</text>
<text x="1352.0" y="600.4" font-size="11.2" fill="#33485a" text-anchor="end" textLength="51.22" lengthAdjust="spacingAndGlyphs">5,200,000</text>
<text x="396.2" y="620.4" font-size="11.2" fill="#33485a" textLength="43.89" lengthAdjust="spacingAndGlyphs">08-STOR</text>
<text x="462.6" y="620.4" font-size="11.2" fill="#33485a" textLength="70.50" lengthAdjust="spacingAndGlyphs">Storage Tanks</text>
<text x="822.6" y="620.4" font-size="11.2" fill="#33485a" text-anchor="end" textLength="51.22" lengthAdjust="spacingAndGlyphs">4,400,000</text>
<text x="889.5" y="620.4" font-size="11.2" fill="#33485a" text-anchor="end" textLength="51.22" lengthAdjust="spacingAndGlyphs">1,020,300</text>
<text x="956.5" y="620.4" font-size="11.2" fill="#33485a" text-anchor="end" textLength="51.22" lengthAdjust="spacingAndGlyphs">1,123,400</text>
<text x="1004.2" y="620.4" font-size="11.2" fill="#33485a" text-anchor="end" textLength="22.41" lengthAdjust="spacingAndGlyphs">1.10</text>
<text x="1052.4" y="620.4" font-size="11.2" fill="#33485a" text-anchor="end" textLength="28.81" lengthAdjust="spacingAndGlyphs">37.00</text>
<text x="1120.3" y="620.4" font-size="11.2" fill="#33485a" text-anchor="end" textLength="51.22" lengthAdjust="spacingAndGlyphs">1,647,900</text>
<text x="1168.0" y="620.4" font-size="11.2" fill="#33485a" text-anchor="end" textLength="28.81" lengthAdjust="spacingAndGlyphs">41.00</text>
<text x="1236.8" y="620.4" font-size="11.2" fill="#33485a" text-anchor="end" textLength="51.22" lengthAdjust="spacingAndGlyphs">1,804,000</text>
<text x="1284.2" y="620.4" font-size="11.2" fill="#33485a" text-anchor="end" textLength="22.41" lengthAdjust="spacingAndGlyphs">1.09</text>
<text x="1352.0" y="620.4" font-size="11.2" fill="#33485a" text-anchor="end" textLength="51.22" lengthAdjust="spacingAndGlyphs">4,400,000</text>
<text x="462.6" y="636.8" font-size="11.4" fill="#222b38" font-weight="bold" textLength="54.6" lengthAdjust="spacingAndGlyphs">- TOTAL -</text>
<text x="823.0" y="636.8" font-size="11.4" fill="#222b38" text-anchor="end" font-weight="bold" textLength="64.84" lengthAdjust="spacingAndGlyphs">39,800,000</text>
<text x="889.9" y="636.8" font-size="11.4" fill="#222b38" text-anchor="end" font-weight="bold" textLength="57.70" lengthAdjust="spacingAndGlyphs">5,970,000</text>
<text x="956.9" y="636.8" font-size="11.4" fill="#222b38" text-anchor="end" font-weight="bold" textLength="57.70" lengthAdjust="spacingAndGlyphs">6,487,400</text>
<text x="1004.6" y="636.8" font-size="11.4" fill="#222b38" text-anchor="end" font-weight="bold" textLength="25.30" lengthAdjust="spacingAndGlyphs">1.09</text>
<text x="1052.8" y="636.8" font-size="11.4" fill="#222b38" text-anchor="end" font-weight="bold" textLength="32.42" lengthAdjust="spacingAndGlyphs">33.00</text>
<text x="1120.7" y="636.8" font-size="11.4" fill="#222b38" text-anchor="end" font-weight="bold" textLength="64.84" lengthAdjust="spacingAndGlyphs">13,266,600</text>
<text x="1168.4" y="636.8" font-size="11.4" fill="#222b38" text-anchor="end" font-weight="bold" textLength="32.42" lengthAdjust="spacingAndGlyphs">35.00</text>
<text x="1237.2" y="636.8" font-size="11.4" fill="#222b38" text-anchor="end" font-weight="bold" textLength="64.84" lengthAdjust="spacingAndGlyphs">13,930,000</text>
<text x="1284.6" y="636.8" font-size="11.4" fill="#222b38" text-anchor="end" font-weight="bold" textLength="25.30" lengthAdjust="spacingAndGlyphs">1.05</text>
<text x="1352.4" y="636.8" font-size="11.4" fill="#222b38" text-anchor="end" font-weight="bold" textLength="64.84" lengthAdjust="spacingAndGlyphs">40,900,000</text>
</g>
<g id="ascertra">
<text class="lib" x="591.6" y="687.2" font-size="49" fill="#03302f" stroke="#03302f" stroke-width="1.8" textLength="188.5" lengthAdjust="spacingAndGlyphs">ascertra</text>
<circle cx="790.7" cy="682.4" r="6.6" fill="#80de80"/>
</g>
</svg>
</body></html>
